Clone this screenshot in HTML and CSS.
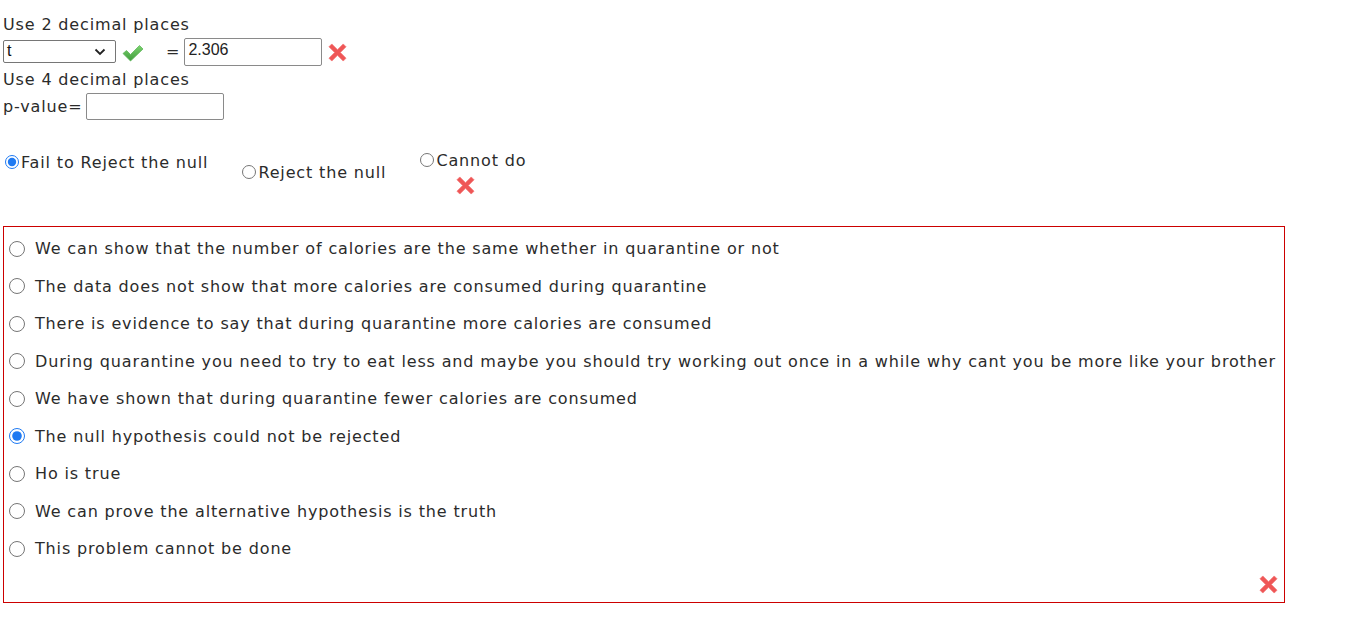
FILE: index.html
```html
<!DOCTYPE html>
<html>
<head>
<meta charset="utf-8">
<link rel="stylesheet" href="styles.css">
</head>
<body>
<div class="page">
  <div class="line first">Use 2 decimal places</div>
  <div class="row r1">
    <div class="select"><span>t</span>
      <svg class="chev" width="12" height="8" viewBox="0 0 12 8"><path d="M1.5 1.5 L6 6 L10.5 1.5" fill="none" stroke="#222" stroke-width="1.8"/></svg>
    </div>
    <svg class="check" width="22" height="18" viewBox="0 0 22 18">
      <defs><linearGradient id="g" x1="0" y1="0" x2="0" y2="1"><stop offset="0" stop-color="#7cd36f"/><stop offset="1" stop-color="#3f9b3c"/></linearGradient></defs>
      <path d="M1 9.5 L4.5 6.5 L8.5 10.5 L17.5 1.5 L21 5 L8.5 17 Z" fill="url(#g)" stroke="#5fb85a" stroke-width="0.8" stroke-linejoin="round"/>
    </svg>
    <span class="eq">=</span>
    <div class="input wide"><span>2.306</span></div>
    <svg class="xmark" width="19" height="19" viewBox="0 0 20 20"><path d="M4 1 L10 7 L16 1 L19 4 L13 10 L19 16 L16 19 L10 13 L4 19 L1 16 L7 10 L1 4 Z" fill="#ef5656" stroke="#f37a7a" stroke-width="0.8" stroke-linejoin="round"/></svg>
  </div>
  <div class="line l2">Use 4 decimal places</div>
  <div class="row r2">
    <span>p-value=</span>
    <div class="input pv"></div>
  </div>

  <div class="choices">
    <label class="c1"><input type="radio" name="a" checked>Fail to Reject the null</label>
    <label class="c2"><input type="radio" name="a">Reject the null</label>
    <div class="c3">
      <label><input type="radio" name="a">Cannot do</label>
      <svg class="xmark sm" width="19" height="19" viewBox="0 0 20 20"><path d="M4 1 L10 7 L16 1 L19 4 L13 10 L19 16 L16 19 L10 13 L4 19 L1 16 L7 10 L1 4 Z" fill="#ef5656" stroke="#f37a7a" stroke-width="0.8" stroke-linejoin="round"/></svg>
    </div>
  </div>

  <div class="box">
    <label class="opt"><input type="radio" name="b">We can show that the number of calories are the same whether in quarantine or not</label>
    <label class="opt"><input type="radio" name="b">The data does not show that more calories are consumed during quarantine</label>
    <label class="opt"><input type="radio" name="b">There is evidence to say that during quarantine more calories are consumed</label>
    <label class="opt"><input type="radio" name="b">During quarantine you need to try to eat less and maybe you should try working out once in a while why cant you be more like your brother</label>
    <label class="opt"><input type="radio" name="b">We have shown that during quarantine fewer calories are consumed</label>
    <label class="opt"><input type="radio" name="b" checked>The null hypothesis could not be rejected</label>
    <label class="opt"><input type="radio" name="b">Ho is true</label>
    <label class="opt"><input type="radio" name="b">We can prove the alternative hypothesis is the truth</label>
    <label class="opt"><input type="radio" name="b">This problem cannot be done</label>
    <div class="boxfoot">
      <svg class="xmark" width="19" height="19" viewBox="0 0 20 20"><path d="M4 1 L10 7 L16 1 L19 4 L13 10 L19 16 L16 19 L10 13 L4 19 L1 16 L7 10 L1 4 Z" fill="#ef5656" stroke="#f37a7a" stroke-width="0.8" stroke-linejoin="round"/></svg>
    </div>
  </div>
</div>
</body>
</html>
```
FILE: styles.css
```css
html, body {
  margin: 0;
  padding: 0;
  background: #fff;
}
body {
  font-family: "DejaVu Sans", Verdana, sans-serif;
  font-size: 16px;
  letter-spacing: 0.85px;
  color: #2b2b2b;
  accent-color: #1f7af2;
}
.page {
  padding: 15px 0 0 3px;
}
.line {
  height: 20px;
  line-height: 20px;
}
.l2 { margin-top: 3px; }
.row {
  display: flex;
  align-items: center;
}
.r1 {
  height: 31px;
  margin-top: 1px;
}
.select {
  width: 108px;
  height: 21px;
  border: 1px solid #767676;
  border-radius: 2px;
  display: flex;
  align-items: center;
  justify-content: space-between;
  padding: 0 0 0 3px;
  box-sizing: content-box;
  font-family: "Liberation Sans", Arial, sans-serif;
  font-size: 16px;
  letter-spacing: 0;
  color: #111;
}
.select span { line-height: 21px; margin-top: -3px; }
.chev { margin-right: 9px; }
.check { margin-left: 6px; margin-top: 2px; }
.eq {
  margin-left: 22px;
  margin-right: 5px;
  letter-spacing: 0;
}
.input {
  border: 1px solid #8a8a8a;
  border-radius: 2px;
  height: 26px;
  box-sizing: content-box;
  font-family: "Liberation Sans", Arial, sans-serif;
  font-size: 16px;
  letter-spacing: 0;
  color: #222;
  display: flex;
  align-items: center;
  padding-left: 3px;
}
.input span { margin-top: -3px; }
.wide { width: 133px; }
.pv { width: 133px; margin-left: 4px; height: 25px; }
.xmark { display: block; }
.r1 .xmark { margin-left: 6px; margin-top: 1px; }
.r2 {
  height: 30px;
  margin-top: 1px;
}
.choices {
  display: flex;
  align-items: flex-start;
  margin-top: 27px;
  height: 78px;
}
.choices input[type=radio] {
  width: 14px;
  height: 14px;
  margin: 0 2px 0 0;
  vertical-align: -1px;
}
.c1 { margin-left: 2px; margin-top: 5px; }
.c2 { margin-left: 34px; margin-top: 15px; }
.c3 { margin-left: 34px; margin-top: 3px; display: flex; flex-direction: column; }
.c3 .xmark { margin-left: 36px; margin-top: 6px; }
.box {
  width: 1280px;
  border: 1px solid #cc0000;
  padding-top: 3px;
  display: flex;
  flex-direction: column;
}
.opt {
  height: 37.5px;
  display: flex;
  align-items: center;
}
.opt input[type=radio] {
  width: 16px;
  height: 16px;
  margin: 0 10px 0 5px;
}
.boxfoot {
  height: 34px;
  display: flex;
  justify-content: flex-end;
  align-items: flex-start;
  padding-right: 6px;
}
.boxfoot .xmark { margin-top: 7px; }
```
